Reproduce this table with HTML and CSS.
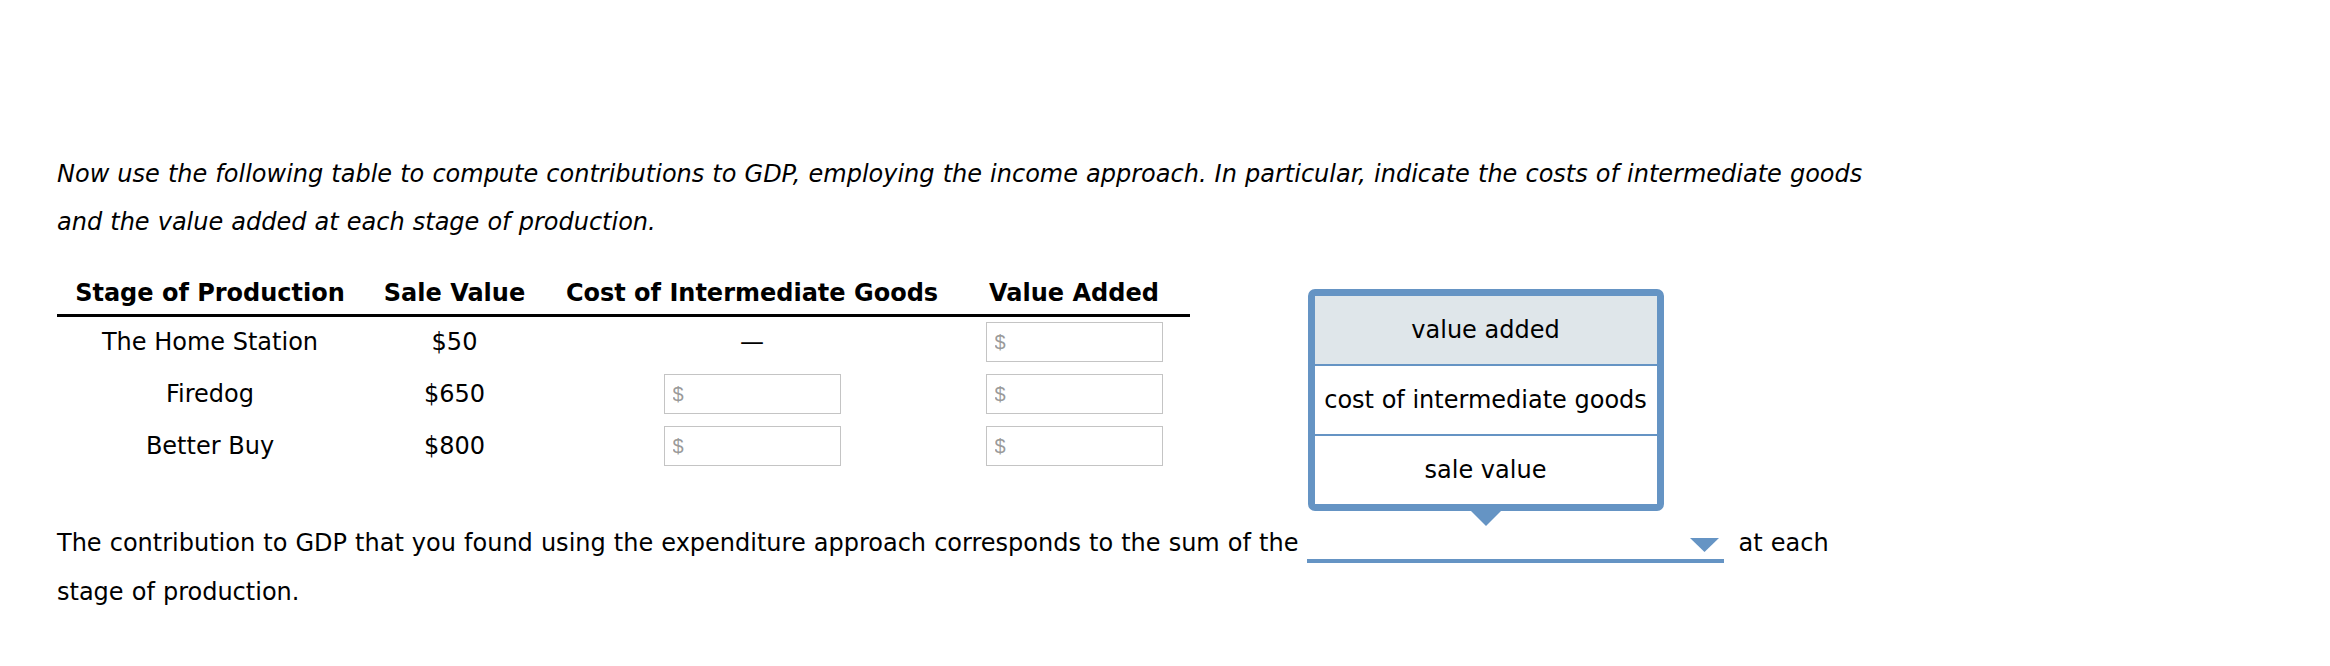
FILE: index.html
```html
<!DOCTYPE html>
<html lang="en">
<head>
<meta charset="utf-8">
<title>GDP income approach</title>
<link rel="stylesheet" href="styles.css">
</head>
<body>
<div class="page">
  <p class="intro">Now use the following table to compute contributions to GDP, employing the income approach. In particular, indicate the costs of intermediate goods and the value added at each stage of production.</p>

  <table class="gdp">
    <thead>
      <tr>
        <th class="c1">Stage of Production</th>
        <th class="c2">Sale Value</th>
        <th class="c3">Cost of Intermediate Goods</th>
        <th class="c4">Value Added</th>
      </tr>
    </thead>
    <tbody>
      <tr>
        <td>The Home Station</td>
        <td>$50</td>
        <td>—</td>
        <td><input class="amt" type="text" placeholder="$"></td>
      </tr>
      <tr>
        <td>Firedog</td>
        <td>$650</td>
        <td><input class="amt" type="text" placeholder="$"></td>
        <td><input class="amt" type="text" placeholder="$"></td>
      </tr>
      <tr>
        <td>Better Buy</td>
        <td>$800</td>
        <td><input class="amt" type="text" placeholder="$"></td>
        <td><input class="amt" type="text" placeholder="$"></td>
      </tr>
    </tbody>
  </table>

  <p class="answer">The contribution to GDP that you found using the expenditure approach corresponds to the sum of the <span class="select"><span class="blank">&nbsp;</span><svg class="caret" viewBox="0 0 29 14" width="29" height="14"><polygon points="0,0 29,0 14.5,14" fill="#6594c4"/></svg><span class="popup"><span class="opt hl">value added</span><span class="opt">cost of intermediate goods</span><span class="opt">sale value</span></span></span> at each stage of production.</p>
</div>
</body>
</html>
```

FILE: styles.css
```css
body {
  margin: 0;
  background: #fff;
  color: #000;
  font-family: "DejaVu Sans", Verdana, sans-serif;
}

.page {
  width: 1830px;
  padding: 150px 0 0 57px;
}

.intro {
  margin: 0;
  font-size: 24px;
  line-height: 48px;
  font-style: italic;
  word-spacing: 0.45px;
}

.gdp {
  margin-top: 23px;
  border-collapse: separate;
  border-spacing: 0;
  table-layout: fixed;
  width: 1133px;
  font-size: 24px;
}

.gdp th {
  font-weight: bold;
  padding: 10px 0 7px;
  line-height: 28px;
  border-bottom: 3px solid #000;
  text-align: center;
  white-space: nowrap;
}

.gdp .c1 { width: 306px; }
.gdp .c2 { width: 183px; }
.gdp .c3 { width: 412px; }
.gdp .c4 { width: 232px; }

.gdp td {
  padding: 5px 0 7px;
  height: 40px;
  line-height: 28px;
  text-align: center;
  vertical-align: middle;
  white-space: nowrap;
}

.amt {
  display: block;
  margin: 0 auto;
  width: 177px;
  height: 40px;
  box-sizing: border-box;
  border: 1px solid #c4c4c4;
  border-radius: 0;
  padding: 0 8px;
  font: 20px "Liberation Sans", Arial, sans-serif;
  color: #000;
  background: #fff;
  outline: none;
}

.amt::placeholder {
  color: #9a9a9a;
  opacity: 1;
}

.answer {
  margin: 46px 0 0;
  font-size: 24px;
  line-height: 49px;
  word-spacing: 0.45px;
}

.select {
  position: relative;
  display: inline-flex;
  width: 417px;
  box-sizing: border-box;
  border-bottom: 4px solid #6594c4;
  line-height: 32px;
  vertical-align: baseline;
  margin: 0 7px 0 0;
  word-spacing: 0;
}

.select .blank {
  flex: 1;
}

.caret {
  align-self: center;
  margin: 4px 5px 0 0;
  flex: none;
}

.popup {
  position: absolute;
  left: 1px;
  bottom: calc(100% + 16px);
  width: 356px;
  box-sizing: border-box;
  border: 7px solid #6594c4;
  border-radius: 7px;
  background: #fff;
  display: flex;
  flex-direction: column;
}

.popup::after {
  content: "";
  position: absolute;
  top: calc(100% + 7px);
  left: 50%;
  margin-left: -15px;
  border-left: 15px solid transparent;
  border-right: 15px solid transparent;
  border-top: 15px solid #6594c4;
}

.opt {
  display: block;
  height: 68px;
  line-height: 68px;
  text-align: center;
  font-size: 24px;
  white-space: nowrap;
  background: #fff;
}

.opt + .opt {
  border-top: 2px solid #6594c4;
}

.opt.hl {
  background: #dfe6ea;
}
```
